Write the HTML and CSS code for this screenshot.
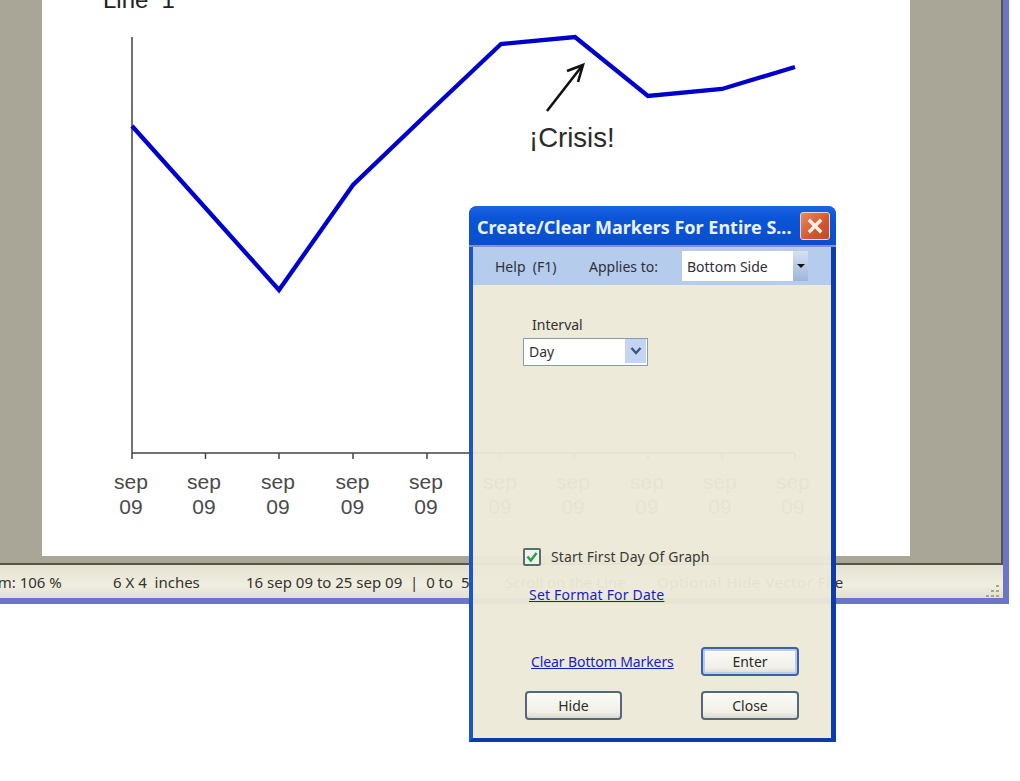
FILE: index.html
```html
<!DOCTYPE html>
<html lang="en">
<head>
<meta charset="utf-8">
<title>Create/Clear Markers</title>
<link rel="stylesheet" href="styles.css">
</head>
<body>
<div class="app">
  <div class="workspace">
    <div class="paper">
      <svg class="chart" viewBox="42 0 868 556" width="868" height="556">
        <text class="chart-title" x="103" y="8">Line<tspan dx="13">1</tspan></text>
        <path class="axis" d="M132 37V459M132 453H795M205.500 453V459M279 453V459M353 453V459M427 453V459M500.500 453V459M574.500 453V459M648 453V459M722 453V459M795 453V459"/>
        <polyline class="series" points="132,126 205.500,208 279,290 353,185 427,114 501,44 575,37 648,96 722,89 795,67"/>
        <path class="arrow" d="M547 111L582 66M567 71L583 65L578 82"/>
        <text class="note" x="529" y="147">¡Crisis!</text>
        <g class="ticks">
          <text x="131" y="489">sep</text><text x="131" y="514">09</text>
          <text x="204" y="489">sep</text><text x="204" y="514">09</text>
          <text x="278" y="489">sep</text><text x="278" y="514">09</text>
          <text x="352.500" y="489">sep</text><text x="352.500" y="514">09</text>
          <text x="426" y="489">sep</text><text x="426" y="514">09</text>
          <text x="500" y="489">sep</text><text x="500" y="514">09</text>
          <text x="573" y="489">sep</text><text x="573" y="514">09</text>
          <text x="647" y="489">sep</text><text x="647" y="514">09</text>
          <text x="720" y="489">sep</text><text x="720" y="514">09</text>
          <text x="793" y="489">sep</text><text x="793" y="514">09</text>
        </g>
      </svg>
    </div>
  </div>
  <div class="statusbar">
    <span class="st st-zoom">Zoom: 106 %</span>
    <span class="st st-size">6 X 4&nbsp; inches</span>
    <span class="st st-range">16 sep 09 to 25 sep 09&nbsp; |&nbsp; 0 to&nbsp; 5</span>
    <span class="st st-scroll">Scroll on the Line</span>
    <span class="st st-opt">Optional Hide Vector File</span>
    <svg class="grip" viewBox="0 0 16 16" width="16" height="16">
      <path d="M11 3h3v2h-3zM6 8h3v2H6zM11 8h3v2h-3zM1 13h3v2H1zM6 13h3v2H6zM11 13h3v2h-3z"/>
    </svg>
  </div>
</div>

<section class="dialog">
  <header class="titlebar">
    <h1 class="title">Create/Clear Markers For Entire S...</h1>
    <button class="close" aria-label="Close">
      <svg viewBox="0 0 16 16" width="18" height="18"><path d="M2.500 2.500L13.500 13.500M13.500 2.500L2.500 13.500"/></svg>
    </button>
  </header>
  <nav class="menubar">
    <span class="menu-help">Help&nbsp; (F1)</span>
    <span class="menu-applies">Applies to:</span>
    <div class="side-select">
      <span>Bottom Side</span>
      <span class="side-btn"><i class="side-caret"></i></span>
    </div>
  </nav>
  <div class="form">
    <label class="interval-label">Interval</label>
    <div class="combo">
      <span>Day</span>
      <span class="combo-btn">
        <svg viewBox="0 0 12 10" width="12" height="10"><path d="M1.500 2L6 7L10.500 2"/></svg>
      </span>
    </div>
    <div class="check-row">
      <span class="check">
        <svg viewBox="0 0 14 14" width="14" height="14"><path d="M2.500 6.500L5.800 10.500L11.500 3"/></svg>
      </span>
      <span>Start First Day Of Graph</span>
    </div>
    <a class="link link-format" href="#">Set Format For Date</a>
    <div class="actions">
      <a class="link link-clear" href="#">Clear Bottom Markers</a>
      <button class="btn btn-focus">Enter</button>
      <button class="btn btn-hide">Hide</button>
      <button class="btn">Close</button>
    </div>
  </div>
</section>
</body>
</html>
```
FILE: styles.css
```css
html, body {
  margin: 0;
  height: 100%;
  background: #fff;
  overflow: hidden;
}

body {
  position: relative;
  width: 1020px;
  height: 781px;
  font-family: "Noto Sans", "Liberation Sans", sans-serif;
  color: #33332e;
}

.app {
  box-sizing: border-box;
  width: 1009px;
  height: 604px;
  display: flex;
  flex-direction: column;
  border-right: 6px solid #6b76c9;
  border-bottom: 6px solid #6b76c9;
}

.workspace {
  box-sizing: border-box;
  height: 565px;
  padding: 0 91px 0 42px;
  background: #a9a698;
  border-right: 2px solid #57544a;
}

.workspace::after {
  content: "";
  display: block;
  height: 2px;
  margin: 7px -91px 0 -42px;
  background: #57544a;
}

.paper {
  width: 868px;
  height: 556px;
  background: #fff;
  overflow: hidden;
}

.chart {
  display: block;
  font-family: "Liberation Sans", Arial, sans-serif;
}

.chart-title {
  font-size: 24px;
  fill: #222;
}

.axis {
  fill: none;
  stroke: #444;
  stroke-width: 1.500;
}

.series {
  fill: none;
  stroke: #0000cc;
  stroke-width: 4.300;
  stroke-linejoin: miter;
}

.arrow {
  fill: none;
  stroke: #111;
  stroke-width: 2.600;
}

.note {
  font-size: 27.500px;
  fill: #2a2a2a;
}

.ticks text {
  font-size: 21px;
  fill: #4a4a4a;
  text-anchor: middle;
}

.statusbar {
  flex: 1;
  display: flex;
  align-items: center;
  font-size: 15px;
  color: #33332e;
  background: linear-gradient(#e4e1d0, #f0eee0 60%, #e2e0d2);
  white-space: nowrap;
  overflow: hidden;
}

.st-zoom {
  margin-left: -29px;
  width: 142px;
  flex: none;
}

.st-size {
  width: 133px;
  flex: none;
}

.st-range {
  width: 259px;
  flex: none;
}

.st-scroll {
  width: 152px;
  flex: none;
}

.st-opt {
  letter-spacing: 0.500px;
}

.grip {
  margin-left: auto;
  margin-right: 2px;
  align-self: flex-end;
  fill: #a8a594;
}

.dialog {
  position: absolute;
  left: 469px;
  top: 206px;
  width: 367px;
  height: 536px;
  box-sizing: border-box;
  display: flex;
  flex-direction: column;
  border-left: 4px solid #1c54cc;
  border-right: 5px solid #0c3cac;
  border-bottom: 4px solid #0c3cac;
  border-radius: 8px 8px 0 0;
  background: rgba(236, 233, 216, 0.96);
  font-size: 14px;
}

.titlebar {
  margin: 0 -5px 0 -4px;
  height: 41px;
  flex: none;
  box-sizing: border-box;
  display: flex;
  align-items: center;
  padding: 0 6px 0 8px;
  border-radius: 8px 8px 0 0;
  background: linear-gradient(#1c64e4, #0b55d8 30%, #0a4ecb);
  border-bottom: 2px solid #7f95c0;
}

.title {
  margin: 3px 0 0;
  flex: 1;
  font-size: 18px;
  font-weight: 700;
  color: #eaf2ff;
  white-space: nowrap;
}

.close {
  width: 30px;
  height: 28px;
  padding: 0;
  display: flex;
  align-items: center;
  justify-content: center;
  background: linear-gradient(135deg, #e88a62, #d2562f 60%, #c04a28);
  border: 1px solid #e9d8d2;
  border-radius: 3px;
}

.close path {
  fill: none;
  stroke: #f8efe8;
  stroke-width: 3;
}

.menubar {
  height: 38px;
  flex: none;
  display: flex;
  align-items: center;
  background: #b6cced;
  color: #2d3038;
}

.menu-help {
  margin-left: 22px;
  width: 94px;
  flex: none;
}

.menu-applies {
  width: 93px;
  flex: none;
}

.side-select {
  width: 126px;
  height: 30px;
  box-sizing: border-box;
  padding: 0 0 0 5px;
  display: flex;
  align-items: center;
  justify-content: space-between;
  background: #fff;
}

.side-btn {
  width: 15px;
  height: 30px;
  box-sizing: border-box;
  padding-top: 13px;
  display: flex;
  justify-content: center;
  background: linear-gradient(#d5e1f2, #9db6dd);
}

.side-caret {
  width: 0;
  height: 0;
  border-left: 4px solid transparent;
  border-right: 4px solid transparent;
  border-top: 4px solid #111;
}

.form {
  flex: 1;
  display: flex;
  flex-direction: column;
  align-items: flex-start;
  padding: 31px 0 0 50px;
}

.interval-label {
  height: 18px;
  line-height: 18px;
  margin-left: 9px;
  margin-bottom: 4px;
}

.combo {
  width: 125px;
  height: 28px;
  box-sizing: border-box;
  padding: 0 0 2px 5px;
  display: flex;
  align-items: center;
  justify-content: space-between;
  background: #fff;
  border: 1px solid #8a9bb0;
}

.combo-btn {
  width: 21px;
  height: 24px;
  margin-right: 1px;
  display: flex;
  align-items: center;
  justify-content: center;
  background: #c3d5f2;
}

.combo-btn path {
  fill: none;
  stroke: #3c5480;
  stroke-width: 2.400;
}

.check-row {
  margin-top: 182px;
  height: 18px;
  display: flex;
  align-items: center;
  gap: 10px;
  color: #3a3a34;
}

.check-row span:last-child {
  letter-spacing: 0.100px;
  margin-top: -2px;
}

.check {
  width: 18px;
  height: 18px;
  box-sizing: border-box;
  display: flex;
  align-items: center;
  justify-content: center;
  background: #f2f2ec;
  border: 2px solid #5a6e6a;
  border-radius: 2px;
}

.check path {
  fill: none;
  stroke: #21a14a;
  stroke-width: 2.400;
}

.link {
  color: #1a1ac8;
  text-decoration: underline;
}

.link-format {
  margin: 20px 0 0 6px;
  height: 18px;
  line-height: 18px;
  letter-spacing: 0.200px;
}

.actions {
  margin: 43px 0 0 2px;
  display: grid;
  grid-template-columns: 176px 98px;
  grid-template-rows: 29px 29px;
  row-gap: 15px;
  align-items: center;
}

.link-clear {
  margin-left: 6px;
  letter-spacing: -0.100px;
}

.btn {
  height: 29px;
  width: 98px;
  padding: 0;
  font: inherit;
  color: #2c2c28;
  background: linear-gradient(#fbfbf8, #f1f0e8 75%, #dcdad0);
  border: 2px solid #55687a;
  border-radius: 4px;
}

.btn-hide {
  width: 97px;
}

.btn-focus {
  border-color: #3d62a8;
  box-shadow: inset 0 0 0 2px #b8cdee;
}
```
